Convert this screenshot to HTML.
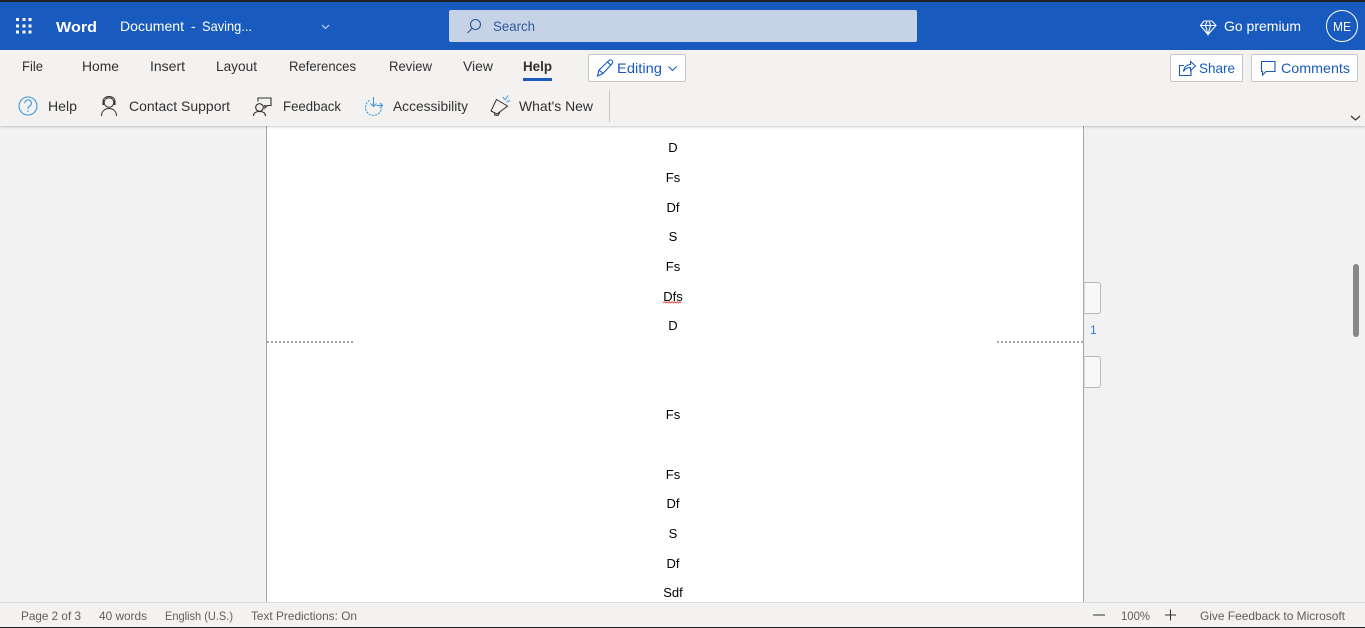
<!DOCTYPE html>
<html lang="en"><head><meta charset="utf-8"><title>Word</title>
<style>
html,body{margin:0;padding:0;width:1365px;height:628px;overflow:hidden;background:#f2f2f2}
svg{display:block}
text{font-family:"Liberation Sans",sans-serif;font-size:14px;fill:#323130}
.w{fill:#fff}.b{fill:#185abd}.s{font-size:12px;fill:#605e5c}.d{fill:#000;font-size:13px}
</style></head><body>
<svg width="1365" height="628" viewBox="0 0 1365 628" xmlns="http://www.w3.org/2000/svg">
<defs><filter id="sh" x="-2%" y="-20%" width="104%" height="140%"><feDropShadow dx="0" dy="1" stdDeviation="1.2" flood-color="#000" flood-opacity=".2"/></filter></defs>
<rect width="1365" height="628" fill="#f2f2f2"/>
<!-- page -->
<rect x="267" y="120" width="816" height="490" fill="#fff"/>
<path d="M266.500 120V603M1083.500 120V603" stroke="#a6a6a6" fill="none"/>
<path d="M267 342H353M997 342H1083" stroke="#a6a6a6" stroke-width="2" stroke-dasharray="2 2" fill="none"/>
<!-- comment tabs -->
<path d="M1084 282.500H1098a2.500 2.500 0 0 1 2.500 2.500V311a2.500 2.500 0 0 1-2.500 2.500H1084zM1084 356.500H1098a2.500 2.500 0 0 1 2.500 2.500V385a2.500 2.500 0 0 1-2.500 2.500H1084z" fill="#f8f8f8" stroke="#b8b8b8"/>
<text x="1090" y="334" style="font-size:12px;fill:#2b7cd3">1</text>
<rect x="1353" y="264" width="6" height="73" rx="3" fill="#8a8886"/>
<!-- doc text -->
<g text-anchor="middle">
<text class="d" x="673" y="152">D</text>
<text class="d" x="673" y="182">Fs</text>
<text class="d" x="673" y="212">Df</text>
<text class="d" x="673" y="241">S</text>
<text class="d" x="673" y="271">Fs</text>
<text class="d" x="673" y="301">Dfs</text>
<text class="d" x="673" y="330">D</text>
<text class="d" x="673" y="419">Fs</text>
<text class="d" x="673" y="479">Fs</text>
<text class="d" x="673" y="508">Df</text>
<text class="d" x="673" y="538">S</text>
<text class="d" x="673" y="568">Df</text>
<text class="d" x="673" y="597">Sdf</text>
</g>
<path d="M663 303l1.300-1.300 1.300 1.300 1.300-1.300 1.300 1.300 1.300-1.300 1.300 1.300 1.300-1.300 1.300 1.300 1.300-1.300 1.300 1.300 1.300-1.300 1.300 1.300 1.300-1.300 1.300 1.300" stroke="#e0352b" fill="none" stroke-width=".8"/>
<!-- ribbon -->
<rect x="0" y="50" width="1365" height="76" fill="#f3f2f1" filter="url(#sh)"/>
<!-- header -->
<rect width="1365" height="50" fill="#185abd"/>
<rect width="1365" height="2" fill="#222"/>
<g fill="#fff">
<rect x="16" y="18" width="3" height="3"/><rect x="22.500" y="18" width="3" height="3"/><rect x="28.500" y="18" width="3" height="3"/>
<rect x="16" y="24.500" width="3" height="3"/><rect x="22.500" y="24.500" width="3" height="3"/><rect x="28.500" y="24.500" width="3" height="3"/>
<rect x="16" y="30.500" width="3" height="3"/><rect x="22.500" y="30.500" width="3" height="3"/><rect x="28.500" y="30.500" width="3" height="3"/>
</g>
<text class="w" x="56" y="32" textLength="41" lengthAdjust="spacingAndGlyphs" style="font-size:15px;font-weight:700">Word</text>
<text class="w" x="120" y="31" textLength="64" lengthAdjust="spacingAndGlyphs">Document</text>
<text class="w" x="191" y="31">-</text>
<text class="w" x="202" y="31" textLength="50" lengthAdjust="spacingAndGlyphs">Saving...</text>
<path d="M322 25l3.500 3.500L329 25" stroke="#cfdcf2" fill="none" stroke-width="1.100"/>
<rect x="449" y="10" width="468" height="32" rx="2" fill="#c6d3e7"/>
<g fill="none" stroke="#2b5797" stroke-width="1.100"><circle cx="475.500" cy="24.500" r="5"/><path d="M472 28.500L467.500 33"/></g>
<text x="493" y="31" textLength="42" lengthAdjust="spacingAndGlyphs" style="fill:#2f5a9c">Search</text>
<g fill="none" stroke="#fff" stroke-width="1.100"><path d="M1204 21H1212L1216 25.500 1208 34.500 1200.500 25.500zM1200.500 25.500H1216M1205.500 25.500L1208 34.500 1210.500 25.500M1205.500 25.500L1207 21M1210.500 25.500L1209 21"/></g>
<text class="w" x="1224" y="31" textLength="77" lengthAdjust="spacingAndGlyphs">Go premium</text>
<circle cx="1342" cy="26" r="15.500" fill="none" stroke="#fff"/>
<text class="w" x="1333" y="31" textLength="18" lengthAdjust="spacingAndGlyphs" style="font-size:13px">ME</text>
<!-- tabs -->
<text x="22" y="71" textLength="21" lengthAdjust="spacingAndGlyphs">File</text>
<text x="82" y="71" textLength="37" lengthAdjust="spacingAndGlyphs">Home</text>
<text x="150" y="71" textLength="35" lengthAdjust="spacingAndGlyphs">Insert</text>
<text x="216" y="71" textLength="41" lengthAdjust="spacingAndGlyphs">Layout</text>
<text x="289" y="71" textLength="67" lengthAdjust="spacingAndGlyphs">References</text>
<text x="389" y="71" textLength="43" lengthAdjust="spacingAndGlyphs">Review</text>
<text x="463" y="71" textLength="30" lengthAdjust="spacingAndGlyphs">View</text>
<text x="523" y="71" textLength="29" lengthAdjust="spacingAndGlyphs" style="font-weight:700">Help</text>
<rect x="523" y="78" width="29" height="3" fill="#185abd"/>
<!-- editing -->
<rect x="588.500" y="54.500" width="97" height="27" rx="1.500" fill="#fff" stroke="#c8c6c4"/>
<g fill="none" stroke="#185abd" stroke-width="1.100"><path d="M597.500 76L599 70 609 60.500a2.200 2.200 0 0 1 3.200 3L603 73.500zM599 70L603 73.500M607.500 62L610.800 65.200"/></g>
<text class="b" x="617" y="73" textLength="45" lengthAdjust="spacingAndGlyphs">Editing</text>
<path d="M668.500 66.500l4 4 4-4" stroke="#185abd" fill="none" stroke-width="1.100"/>
<!-- share / comments -->
<rect x="1170.500" y="54.500" width="72" height="27" rx="1.500" fill="#fff" stroke="#c8c6c4"/>
<g fill="none" stroke="#185abd" stroke-width="1.100"><path d="M1184 65.500H1179.500V75.500H1191V70"/><path d="M1183.500 71.500C1184 66.500 1187.500 64.500 1190.500 64.500V61.500L1195.500 66 1190.500 70.500V67.500C1187.500 67.500 1185 68.500 1183.500 71.500z"/></g>
<text class="b" x="1199" y="73" textLength="36" lengthAdjust="spacingAndGlyphs">Share</text>
<rect x="1251.500" y="54.500" width="106" height="27" rx="1.500" fill="#fff" stroke="#c8c6c4"/>
<path d="M1261.500 61.500H1275V71.500H1266L1262.500 75V71.500H1261.500z" fill="none" stroke="#185abd" stroke-width="1.100"/>
<text class="b" x="1281" y="73" textLength="69" lengthAdjust="spacingAndGlyphs">Comments</text>
<!-- command bar -->
<circle cx="28" cy="106" r="9" fill="none" stroke="#3a96dd" stroke-width="1.100"/>
<path d="M24.800 103.200a3.300 3.300 0 1 1 5 2.800c-1.200.8-1.800 1.400-1.800 2.700" fill="none" stroke="#3a96dd" stroke-width="1.100"/><circle cx="28" cy="111" r=".8" fill="#3a96dd"/>
<text x="48" y="111" textLength="29" lengthAdjust="spacingAndGlyphs">Help</text>
<g fill="none" stroke="#323130" stroke-width="1"><circle cx="109" cy="102.500" r="4.800"/><path d="M101.500 116C101.500 111.500 104.500 108.500 109 108.500S116.500 111.500 116.500 116"/><path d="M103 104V101.500C103 98.500 105.500 96.500 109 96.500S115 98.500 115 101.500V104"/></g>
<path d="M102.500 100.500h1.500v4.500h-1.500zM114 100.500h1.500v4.500H114z" fill="#323130"/>
<text x="129" y="111" textLength="101" lengthAdjust="spacingAndGlyphs">Contact Support</text>
<g fill="none" stroke="#323130" stroke-width="1.100"><circle cx="259.500" cy="107.500" r="3.800"/><path d="M253.500 116C253.500 113 256 111.500 259.500 111.500S265.500 113 265.500 116"/><path d="M258 101.500V98H271V105.500H267L265 108V105.500H264"/></g>
<text x="283" y="111" textLength="58" lengthAdjust="spacingAndGlyphs">Feedback</text>
<g fill="none" stroke="#3a96dd" stroke-width="1.100"><path d="M369.500 100.500A8 8 0 1 0 381.500 108" stroke-dasharray="2 1.200"/><path d="M373.500 97V106M370.500 103.500L373.500 106.500 376.500 103.500M376.500 105.500H382.500M380 103L382.500 105.500 380 108"/></g>
<text x="393" y="111" textLength="75" lengthAdjust="spacingAndGlyphs">Accessibility</text>
<g fill="none" stroke="#323130" stroke-width="1"><path d="M496.500 99.500L507.500 106 497 114 491 111zM495 112.500L494.500 115 498 115.500 500 112"/></g>
<path d="M503 97L504.500 99.500M508 95.500L505 100M510 100.500L506.500 102" stroke="#3a96dd" fill="none"/>
<text x="519" y="111" textLength="74" lengthAdjust="spacingAndGlyphs">What's New</text>
<rect x="609" y="90" width="1" height="32" fill="#c8c6c4"/>
<path d="M1351 116l4.500 4 4.500-4" stroke="#323130" fill="none" stroke-width="1.200"/>
<!-- status bar -->
<rect x="0" y="602" width="1365" height="25" fill="#f3f2f1"/>
<rect x="0" y="602" width="1365" height="1" fill="#dcdcdc"/>
<rect x="0" y="627" width="1365" height="1" fill="#222"/>
<text class="s" x="21" y="620" textLength="60" lengthAdjust="spacingAndGlyphs">Page 2 of 3</text>
<text class="s" x="99" y="620" textLength="48" lengthAdjust="spacingAndGlyphs">40 words</text>
<text class="s" x="165" y="620" textLength="68" lengthAdjust="spacingAndGlyphs">English (U.S.)</text>
<text class="s" x="251" y="620" textLength="106" lengthAdjust="spacingAndGlyphs">Text Predictions: On</text>
<path d="M1093 615H1105M1165 615H1176M1170.500 609.500V620.500" stroke="#323130" fill="none"/>
<text class="s" x="1121" y="620" textLength="29" lengthAdjust="spacingAndGlyphs">100%</text>
<text class="s" x="1200" y="620" textLength="145" lengthAdjust="spacingAndGlyphs">Give Feedback to Microsoft</text>
</svg>
</body></html>
